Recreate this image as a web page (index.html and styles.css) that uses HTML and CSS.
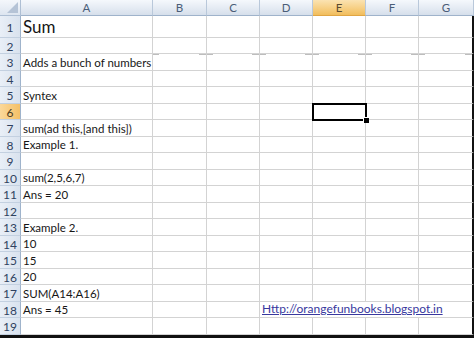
FILE: index.html
```html
<!DOCTYPE html>
<html>
<head>
<meta charset="utf-8">
<link rel="stylesheet" href="styles.css">
</head>
<body>
<div class="sheet">
  <div class="corner"><svg class="tri" width="12" height="12" viewBox="0 0 12 12"><polygon points="12,1 12,12 1,12" fill="#b5c3d6"/></svg></div>
  <div class="ch">A</div><div class="ch">B</div><div class="ch">C</div><div class="ch">D</div><div class="ch sel">E</div><div class="ch">F</div><div class="ch last">G</div>

  <div class="rh">1</div><div class="c a big">Sum</div><div class="c"></div><div class="c"></div><div class="c"></div><div class="c"></div><div class="c"></div><div class="c g"></div>
  <div class="rh">2</div><div class="c a"></div><div class="c"></div><div class="c"></div><div class="c"></div><div class="c"></div><div class="c"></div><div class="c g"></div>
  <div class="rh">3</div><div class="c a">Adds a bunch of numbers</div><div class="c pb"></div><div class="c pb"></div><div class="c pb"></div><div class="c pb"></div><div class="c pb"></div><div class="c g pb"></div>
  <div class="rh">4</div><div class="c a"></div><div class="c"></div><div class="c"></div><div class="c"></div><div class="c"></div><div class="c"></div><div class="c g"></div>
  <div class="rh">5</div><div class="c a">Syntex</div><div class="c"></div><div class="c"></div><div class="c"></div><div class="c"></div><div class="c"></div><div class="c g"></div>
  <div class="rh sel">6</div><div class="c a"></div><div class="c"></div><div class="c"></div><div class="c"></div><div class="c active"></div><div class="c"></div><div class="c g"></div>
  <div class="rh">7</div><div class="c a">sum(ad this,[and this])</div><div class="c"></div><div class="c"></div><div class="c"></div><div class="c"></div><div class="c"></div><div class="c g"></div>
  <div class="rh">8</div><div class="c a">Example 1.</div><div class="c"></div><div class="c"></div><div class="c"></div><div class="c"></div><div class="c"></div><div class="c g"></div>
  <div class="rh">9</div><div class="c a"></div><div class="c"></div><div class="c"></div><div class="c"></div><div class="c"></div><div class="c"></div><div class="c g"></div>
  <div class="rh">10</div><div class="c a">sum(2,5,6,7)</div><div class="c"></div><div class="c"></div><div class="c"></div><div class="c"></div><div class="c"></div><div class="c g"></div>
  <div class="rh">11</div><div class="c a">Ans = 20</div><div class="c"></div><div class="c"></div><div class="c"></div><div class="c"></div><div class="c"></div><div class="c g"></div>
  <div class="rh">12</div><div class="c a"></div><div class="c"></div><div class="c"></div><div class="c"></div><div class="c"></div><div class="c"></div><div class="c g"></div>
  <div class="rh">13</div><div class="c a">Example 2.</div><div class="c"></div><div class="c"></div><div class="c"></div><div class="c"></div><div class="c"></div><div class="c g"></div>
  <div class="rh">14</div><div class="c a">10</div><div class="c"></div><div class="c"></div><div class="c"></div><div class="c"></div><div class="c"></div><div class="c g"></div>
  <div class="rh">15</div><div class="c a">15</div><div class="c"></div><div class="c"></div><div class="c"></div><div class="c"></div><div class="c"></div><div class="c g"></div>
  <div class="rh">16</div><div class="c a">20</div><div class="c"></div><div class="c"></div><div class="c"></div><div class="c"></div><div class="c"></div><div class="c g"></div>
  <div class="rh">17</div><div class="c a">SUM(A14:A16)</div><div class="c"></div><div class="c"></div><div class="c"></div><div class="c"></div><div class="c"></div><div class="c g"></div>
  <div class="rh">18</div><div class="c a">Ans = 45</div><div class="c"></div><div class="c"></div><div class="c span g"><a class="link" href="#">Http://orangefunbooks.blogspot.in</a></div>
  <div class="rh">19</div><div class="c a"></div><div class="c"></div><div class="c"></div><div class="c"></div><div class="c"></div><div class="c"></div><div class="c g"></div>
  <div class="foot"></div>
</div>
</body>
</html>
```
FILE: styles.css
```css
html, body {
  margin: 0;
  background: #ffffff;
}
body {
  width: 474px;
  height: 341px;
  overflow: hidden;
  font-family: Lato, "Liberation Sans", sans-serif;
}
.sheet {
  display: grid;
  grid-template-columns: 21px 132px 54px 53px 53px 53px 53px 55px;
  grid-template-rows: 16px 22px repeat(9, 16px 17px) 3px;
}
.corner {
  box-sizing: border-box;
  background: linear-gradient(#f4f7fb, #dde5f0);
  border-right: 1px solid #aebfd4;
  border-bottom: 1px solid #aebfd4;
  display: flex;
  align-items: flex-end;
  justify-content: flex-end;
  padding: 0 2px 2px 0;
}
.ch {
  box-sizing: border-box;
  background: linear-gradient(#f5f8fc 0%, #e6ecf4 50%, #d6dfeb 100%);
  border-right: 1px solid #b9c8da;
  border-bottom: 1px solid #9fb3cb;
  color: #4a5d78;
  font-size: 11.5px;
  display: flex;
  align-items: center;
  justify-content: center;
}
.ch.sel {
  background: linear-gradient(#fbe3b2 0%, #f6cd7f 60%, #f1bd5c 100%);
  border-bottom-color: #e0a543;
  color: #5a4a30;
}
.rh {
  box-sizing: border-box;
  background: linear-gradient(90deg, #e9eff7, #d9e2ee);
  border-right: 1px solid #9fb3cb;
  border-bottom: 1px solid #c3d0e0;
  color: #2f4260;
  font-size: 12px;
  display: flex;
  align-items: center;
  justify-content: center;
  padding-top: 1px;
}
.rh.sel {
  background: linear-gradient(90deg, #fbd89a, #f4c067);
  color: #4a3a20;
}
.c {
  box-sizing: border-box;
  border-right: 1px solid #d3d3d3;
  border-bottom: 1px solid #d3d3d3;
  background: #ffffff;
  font-size: 11.5px;
  color: #161616;
  display: flex;
  align-items: flex-end;
  padding: 0 0 1px 2px;
  white-space: nowrap;
}
.c.g {
  border-right: 2px solid #111111;
}
.c.big {
  font-size: 17px;
  padding-bottom: 0;
}
.c.span {
  grid-column: span 4;
}
.c.pb {
  background-image: linear-gradient(90deg, #bdbdbd 0 6px, transparent 6px calc(100% - 7px), #bdbdbd calc(100% - 7px));
  background-size: 100% 1px;
  background-repeat: no-repeat;
  background-position: 0 0;
}
.c.active {
  position: relative;
  z-index: 2;
}
.c.active::before {
  content: "";
  position: absolute;
  left: -1px;
  top: -1px;
  right: -2px;
  bottom: -2px;
  border: 2px solid #000000;
}
.c.active::after {
  content: "";
  position: absolute;
  right: -4px;
  bottom: -4px;
  width: 5px;
  height: 5px;
  background: #000000;
  border-left: 1px solid #fff;
  border-top: 1px solid #fff;
}
.link {
  color: #38389e;
  font-size: 12px;
  text-decoration: underline;
}
.foot {
  grid-column: 1 / 9;
  background: #111111;
}
```
